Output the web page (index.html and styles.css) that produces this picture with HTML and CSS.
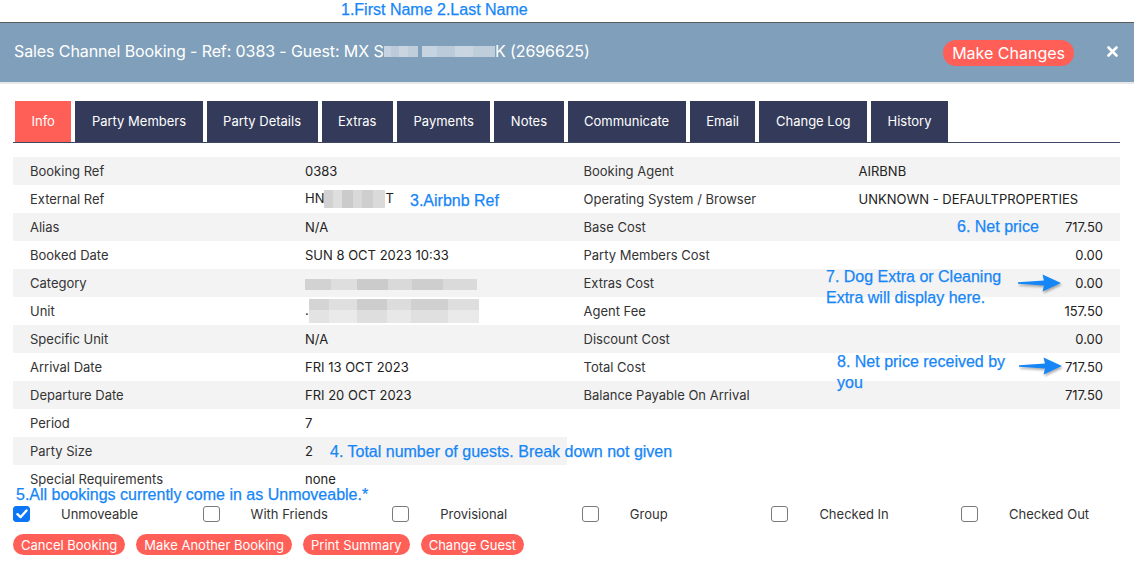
FILE: index.html
```html
<!DOCTYPE html>
<html lang="en">
<head>
  <meta charset="UTF-8">
  <title>Sales Channel Booking</title>
  <link rel="stylesheet" href="styles.css">
</head>
<body>
  <div class="top-strip"></div>

  <header class="modal-header">
    <h1 class="modal-title">Sales Channel Booking - Ref: 0383 - Guest: MX S<span class="blur blur-light blur-first"></span> <span class="blur blur-light blur-last"></span>K (2696625)</h1>
    <div class="header-actions">
      <button class="pill pill-lg">Make Changes</button>
      <svg class="close" width="11" height="11" viewBox="0 0 11 11"><path d="M1.5 1.5 L9.5 9.5 M9.5 1.5 L1.5 9.5" stroke="#fff" stroke-width="2.6" stroke-linecap="round"/></svg>
    </div>
  </header>

  <div class="modal-body">
    <!-- tabs -->
    <nav class="tabs">
      <a class="tab active">Info</a>
      <a class="tab">Party Members</a>
      <a class="tab">Party Details</a>
      <a class="tab">Extras</a>
      <a class="tab">Payments</a>
      <a class="tab">Notes</a>
      <a class="tab">Communicate</a>
      <a class="tab">Email</a>
      <a class="tab">Change Log</a>
      <a class="tab">History</a>
    </nav>

    <div class="info-grid">
      <div class="info-table">
        <div class="row"><span class="label">Booking Ref</span><span class="value">0383</span></div>
        <div class="row"><span class="label">External Ref</span><span class="value">HN<span class="blur blur-gray blur-ext"></span>T</span></div>
        <div class="row"><span class="label">Alias</span><span class="value">N/A</span></div>
        <div class="row"><span class="label">Booked Date</span><span class="value">SUN 8 OCT 2023 10:33</span></div>
        <div class="row"><span class="label">Category</span><span class="value"><span class="blur blur-gray blur-cat"></span></span></div>
        <div class="row"><span class="label">Unit</span><span class="value">.<span class="blur blur-gray blur-unit"></span></span></div>
        <div class="row"><span class="label">Specific Unit</span><span class="value">N/A</span></div>
        <div class="row"><span class="label">Arrival Date</span><span class="value">FRI 13 OCT 2023</span></div>
        <div class="row"><span class="label">Departure Date</span><span class="value">FRI 20 OCT 2023</span></div>
        <div class="row"><span class="label">Period</span><span class="value">7</span></div>
        <div class="row"><span class="label">Party Size</span><span class="value">2</span></div>
        <div class="row"><span class="label">Special Requirements</span><span class="value">none</span></div>
      </div>

      <div class="info-table">
        <div class="row"><span class="label">Booking Agent</span><span class="value">AIRBNB</span></div>
        <div class="row"><span class="label">Operating System / Browser</span><span class="value">UNKNOWN - DEFAULTPROPERTIES</span></div>
        <div class="row"><span class="label">Base Cost</span><span class="value num">717.50</span></div>
        <div class="row"><span class="label">Party Members Cost</span><span class="value num">0.00</span></div>
        <div class="row"><span class="label">Extras Cost</span><span class="value num">0.00</span></div>
        <div class="row"><span class="label">Agent Fee</span><span class="value num">157.50</span></div>
        <div class="row"><span class="label">Discount Cost</span><span class="value num">0.00</span></div>
        <div class="row"><span class="label">Total Cost</span><span class="value num">717.50</span></div>
        <div class="row"><span class="label">Balance Payable On Arrival</span><span class="value num">717.50</span></div>
      </div>
    </div>

    <div class="flags">
      <label class="flag"><span class="check checked"><svg width="12" height="10" viewBox="0 0 12 10"><path d="M1.5 5.2 L4.5 8.2 L10.5 1.5" fill="none" stroke="#fff" stroke-width="2.4" stroke-linecap="round" stroke-linejoin="round"/></svg></span>Unmoveable</label>
      <label class="flag"><span class="check"></span>With Friends</label>
      <label class="flag"><span class="check"></span>Provisional</label>
      <label class="flag"><span class="check"></span>Group</label>
      <label class="flag"><span class="check"></span>Checked In</label>
      <label class="flag"><span class="check"></span>Checked Out</label>
    </div>

    <div class="actions">
      <button class="pill">Cancel Booking</button>
      <button class="pill">Make Another Booking</button>
      <button class="pill">Print Summary</button>
      <button class="pill">Change Guest</button>
    </div>
  </div>

  <!-- screenshot notes laid over the page -->
  <div class="note note-1">1.First Name 2.Last Name</div>
  <div class="note note-3">3.Airbnb Ref</div>
  <div class="note note-4">4. Total number of guests. Break down not given</div>
  <div class="note note-5">5.All bookings currently come in as Unmoveable.*</div>
  <div class="note note-6">6. Net price</div>
  <div class="note note-7">7. Dog Extra or Cleaning<br>Extra will display here.</div>
  <div class="note note-8">8. Net price received by<br>you</div>
  <svg class="arrow arrow-7" width="44" height="20" viewBox="0 0 44 20"><path d="M0 9.2 L26 7.4 L24.5 1.5 L43 10 L24.5 18.5 L26 12.6 L0 10.8 Z" fill="#1686f7"/></svg>
  <svg class="arrow arrow-8" width="44" height="20" viewBox="0 0 44 20"><path d="M0 9.2 L26 7.4 L24.5 1.5 L43 10 L24.5 18.5 L26 12.6 L0 10.8 Z" fill="#1686f7"/></svg>
</body>
</html>
```

FILE: styles.css
```css
body {
  margin: 0;
  font-family: "Inter", "Liberation Sans", sans-serif;
  font-size: 13px;
  color: #333;
  background: #fff;
}
.top-strip {
  height: 22px;
}
.modal-header {
  display: flex;
  align-items: center;
  justify-content: space-between;
  height: 59px;
  padding: 0 16px 0 14px;
  background: #7f9fbb;
  border-top: 1px solid #5a5a5a;
  border-bottom: 2px solid #e8e8e8;
}
.modal-title {
  margin: 0;
  margin-top: -4px;
  font-size: 16px;
  font-weight: 400;
  letter-spacing: -0.1px;
  color: #fff;
}
.header-actions {
  display: flex;
  align-items: center;
  gap: 33px;
}
.close {
  margin-top: -3px;
}
.pill {
  height: 21px;
  padding: 0 8px;
  border: none;
  border-radius: 11px;
  background: #ff5f57;
  color: #fff;
  font-family: inherit;
  font-size: 13px;
  cursor: pointer;
}
.pill-lg {
  height: 26px;
  padding: 0 9px;
  border-radius: 13px;
  font-size: 16px;
}
.blur {
  display: inline-block;
  vertical-align: middle;
}
.blur-light {
  height: 11px;
  margin-top: -2px;
  background: linear-gradient(90deg, #c6d4e1 0 20%, #bccbda 20% 45%, #c9d6e2 45% 70%, #c0cedc 70% 100%);
}
.blur-first { width: 34px; }
.blur-last { width: 73px; }
.blur-gray {
  background: linear-gradient(90deg, #d2d2d2 0 15%, #dedede 15% 30%, #cbcbcb 30% 48%, #d9d9d9 48% 62%, #cecece 62% 80%, #dadada 80% 100%);
}
.blur-ext { width: 61px; height: 18px; }
.blur-cat { width: 172px; height: 11px; }
.blur-unit {
  width: 170px;
  height: 24px;
  background: linear-gradient(180deg, rgba(255,255,255,0) 0 45%, rgba(255,255,255,0.35) 45% 100%), linear-gradient(90deg, #d4d4d4 0 12%, #dfdfdf 12% 28%, #cdcdcd 28% 46%, #dcdcdc 46% 60%, #d0d0d0 60% 82%, #dedede 82% 100%);
}
.modal-body {
  padding: 17px 14px 0 13px;
}
.tabs {
  display: flex;
  gap: 4px;
  padding-left: 2px;
  border-bottom: 1px solid #3d4762;
}
.tab {
  height: 41px;
  line-height: 41px;
  padding: 0 16.5px;
  background: #343b5a;
  color: #fff;
}
.tab.active {
  background: #ff5f57;
}
.info-grid {
  display: grid;
  grid-template-columns: 1fr 1fr;
  align-items: start;
  margin-top: 14px;
}
.row {
  display: grid;
  grid-template-columns: 292px 1fr;
  align-items: center;
  height: 28px;
}
.row:nth-child(odd) {
  background: #f3f3f3;
}
.label {
  padding-left: 17px;
}
.value {
  color: #222;
}
.num {
  text-align: right;
  padding-right: 17px;
}
.flags {
  display: grid;
  grid-template-columns: repeat(5, 189.6px) 1fr;
  margin-top: 13px;
}
.flag {
  display: flex;
  align-items: center;
  gap: 31px;
  height: 16px;
}
.check {
  display: flex;
  align-items: center;
  justify-content: center;
  box-sizing: border-box;
  width: 17px;
  height: 16px;
  border: 1px solid #7a7a7a;
  border-radius: 3px;
  background: #fff;
}
.check.checked {
  background: #0b75f5;
  border-color: #0b75f5;
}
.actions {
  display: flex;
  gap: 11px;
  margin-top: 12px;
}
.note {
  position: absolute;
  font-family: "Liberation Sans", Arial, sans-serif;
  font-size: 16px;
  line-height: 21px;
  color: #1686f7;
  -webkit-text-stroke: 0.25px #1686f7;
  white-space: nowrap;
}
.note-1 { left: 341px; top: -1px; }
.note-3 { left: 410px; top: 190px; }
.note-4 { left: 330px; top: 441px; }
.note-5 { left: 16px; top: 484px; }
.note-6 { left: 957px; top: 216px; }
.note-7 { left: 826px; top: 266px; }
.note-8 { left: 837px; top: 351px; }
.arrow {
  position: absolute;
  filter: drop-shadow(1px 2px 1px rgba(0, 0, 0, 0.3));
}
.arrow-7 { left: 1018px; top: 273px; }
.arrow-8 { left: 1019px; top: 356px; }
```
